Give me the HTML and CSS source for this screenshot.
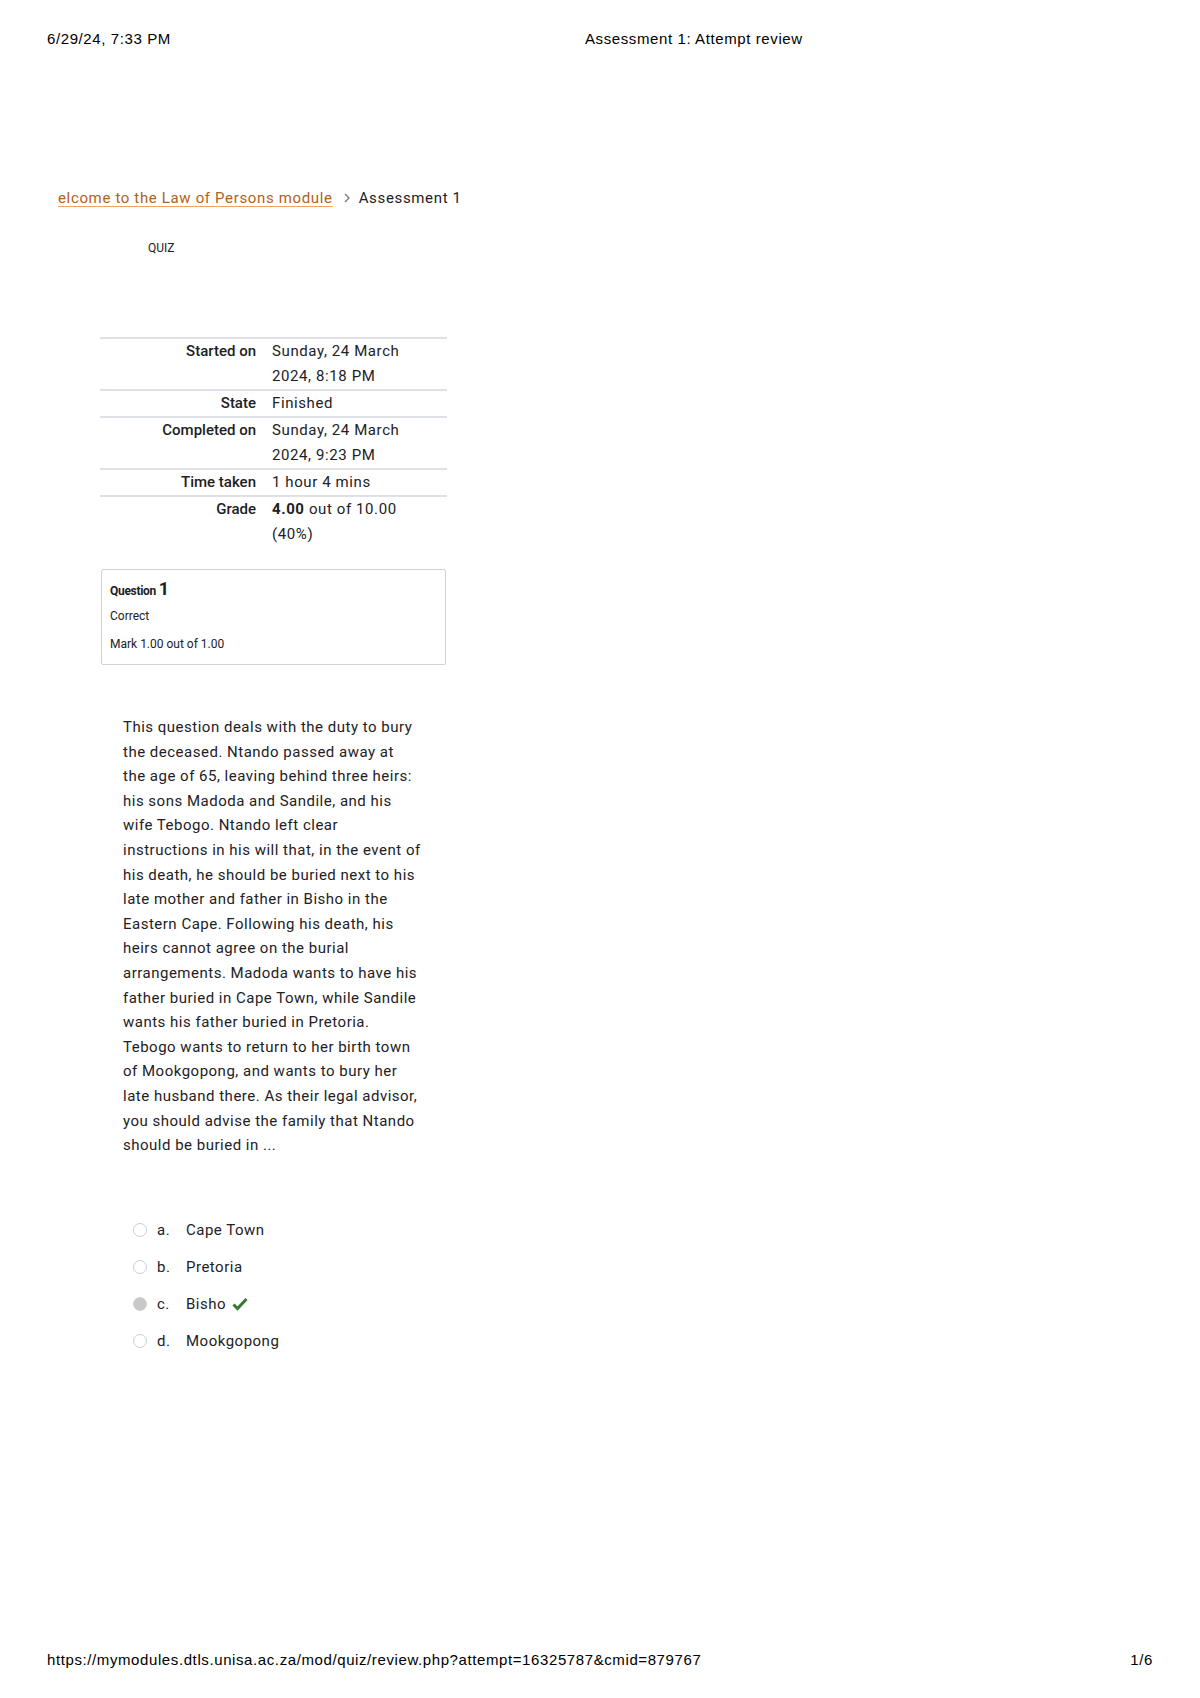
FILE: index.html
```html
<!DOCTYPE html>
<html lang="en">
<head>
    <meta charset="UTF-8">
    <title>Assessment 1: Attempt review</title>
    <link rel="stylesheet" href="styles.css">
</head>
<body>
    <div class="print-header">
        <span class="print-date">6/29/24, 7:33 PM</span>
        <span class="print-title">Assessment 1: Attempt review</span>
    </div>

    <main class="page">
        <nav class="breadcrumb">
            <a href="#">elcome to the Law of Persons module</a>
            <svg class="crumb-sep" width="10" height="12" viewBox="0 0 10 12"><path d="M3 2l4 4-4 4" fill="none" stroke="#777" stroke-width="1.3"/></svg>
            <span>Assessment 1</span>
        </nav>

        <div class="kind">QUIZ</div>

        <table class="summary">
            <tr><th>Started on</th><td>Sunday, 24 March<br>2024, 8:18 PM</td></tr>
            <tr><th>State</th><td>Finished</td></tr>
            <tr><th>Completed on</th><td>Sunday, 24 March<br>2024, 9:23 PM</td></tr>
            <tr><th>Time taken</th><td>1 hour 4 mins</td></tr>
            <tr><th>Grade</th><td><b>4.00</b> out of 10.00<br>(40%)</td></tr>
        </table>

        <div class="q-info">
            <h3>Question <span class="qno">1</span></h3>
            <div class="state">Correct</div>
            <div class="grade">Mark 1.00 out of 1.00</div>
        </div>

        <div class="q-text">
            This question deals with the duty to bury<br>
            the deceased. Ntando passed away at<br>
            the age of 65, leaving behind three heirs:<br>
            his sons Madoda and Sandile, and his<br>
            wife Tebogo. Ntando left clear<br>
            instructions in his will that, in the event of<br>
            his death, he should be buried next to his<br>
            late mother and father in Bisho in the<br>
            Eastern Cape. Following his death, his<br>
            heirs cannot agree on the burial<br>
            arrangements. Madoda wants to have his<br>
            father buried in Cape Town, while Sandile<br>
            wants his father buried in Pretoria.<br>
            Tebogo wants to return to her birth town<br>
            of Mookgopong, and wants to bury her<br>
            late husband there. As their legal advisor,<br>
            you should advise the family that Ntando<br>
            should be buried in ...
        </div>

        <div class="answers">
            <div class="opt"><span class="radio"></span><span class="letter">a.</span>Cape Town</div>
            <div class="opt"><span class="radio"></span><span class="letter">b.</span>Pretoria</div>
            <div class="opt"><span class="radio checked"></span><span class="letter">c.</span>Bisho
                <svg class="tick" width="16" height="14" viewBox="0 0 16 14"><path d="M1.5 7.5l4 4 9-9.5" fill="none" stroke="#357a32" stroke-width="3"/></svg>
            </div>
            <div class="opt"><span class="radio"></span><span class="letter">d.</span>Mookgopong</div>
        </div>
    </main>

    <div class="print-footer">
        <span>https://mymodules.dtls.unisa.ac.za/mod/quiz/review.php?attempt=16325787&amp;cmid=879767</span>
        <span>1/6</span>
    </div>
</body>
</html>
```

FILE: styles.css
```css
body {
    margin: 0;
    font-family: Roboto, "Noto Sans", sans-serif;
    color: #1d2125;
    background: #fff;
    width: 1200px;
    height: 1698px;
    position: relative;
}

.print-header {
    display: flex;
    padding: 30px 0 0 47px;
    font-family: "Liberation Sans", Arial, sans-serif;
    font-size: 15px;
    line-height: 18px;
    letter-spacing: 0.6px;
    color: #000;
}

.print-date {
    width: 538px;
}

.page {
    padding: 0 0 0 58px;
}

.breadcrumb {
    display: flex;
    align-items: center;
    margin-top: 140px;
    font-size: 15px;
    line-height: 20px;
    letter-spacing: 0.65px;
}

.breadcrumb a {
    color: #b0611a;
    text-decoration: underline;
    text-decoration-color: #f0a360;
    text-underline-offset: 3px;
}

.crumb-sep {
    margin: 0 7px 0 9px;
}

.kind {
    margin: 32px 0 0 90px;
    font-size: 12px;
    line-height: 16px;
}

.summary {
    margin: 81px 0 0 42px;
    width: 347px;
    border-collapse: collapse;
    font-size: 15px;
    line-height: 25px;
    letter-spacing: 0.6px;
}

.summary tr {
    border-top: 2px solid #dee2e6;
}

.summary th {
    width: 156px;
    padding: 0 16px 0 0;
    text-align: right;
    vertical-align: top;
    font-weight: 500;
    letter-spacing: 0;
    white-space: nowrap;
}

.summary td {
    padding: 0;
    vertical-align: top;
    white-space: nowrap;
}

.summary b {
    font-weight: 700;
}

.q-info {
    margin: 22px 0 0 43px;
    width: 327px;
    padding: 8px 8px 6px;
    border: 1px solid #cfd2d6;
    border-radius: 2px;
}

.q-info h3 {
    margin: 0;
    font-size: 12px;
    font-weight: 700;
    line-height: 22px;
    letter-spacing: -0.3px;
}

.qno {
    font-size: 18px;
}

.state,
.grade {
    font-size: 12px;
    line-height: 28px;
}

.q-text {
    margin: 50px 0 0 65px;
    font-size: 15px;
    line-height: 24.6px;
    letter-spacing: 0.5px;
    white-space: nowrap;
}

.answers {
    margin: 54px 0 0 75px;
}

.opt {
    display: flex;
    align-items: center;
    height: 37px;
    font-size: 15px;
    letter-spacing: 0.5px;
}

.radio {
    width: 12px;
    height: 12px;
    border: 1px solid #d0d0d0;
    border-radius: 50%;
    margin-right: 10px;
}

.radio.checked {
    background: #c8c8c8;
}

.letter {
    width: 29px;
}

.tick {
    margin-left: 6px;
}

.print-footer {
    position: absolute;
    left: 47px;
    right: 47px;
    top: 1651px;
    display: flex;
    justify-content: space-between;
    font-family: "Liberation Sans", Arial, sans-serif;
    font-size: 15px;
    line-height: 18px;
    letter-spacing: 0.6px;
    color: #000;
}
```
